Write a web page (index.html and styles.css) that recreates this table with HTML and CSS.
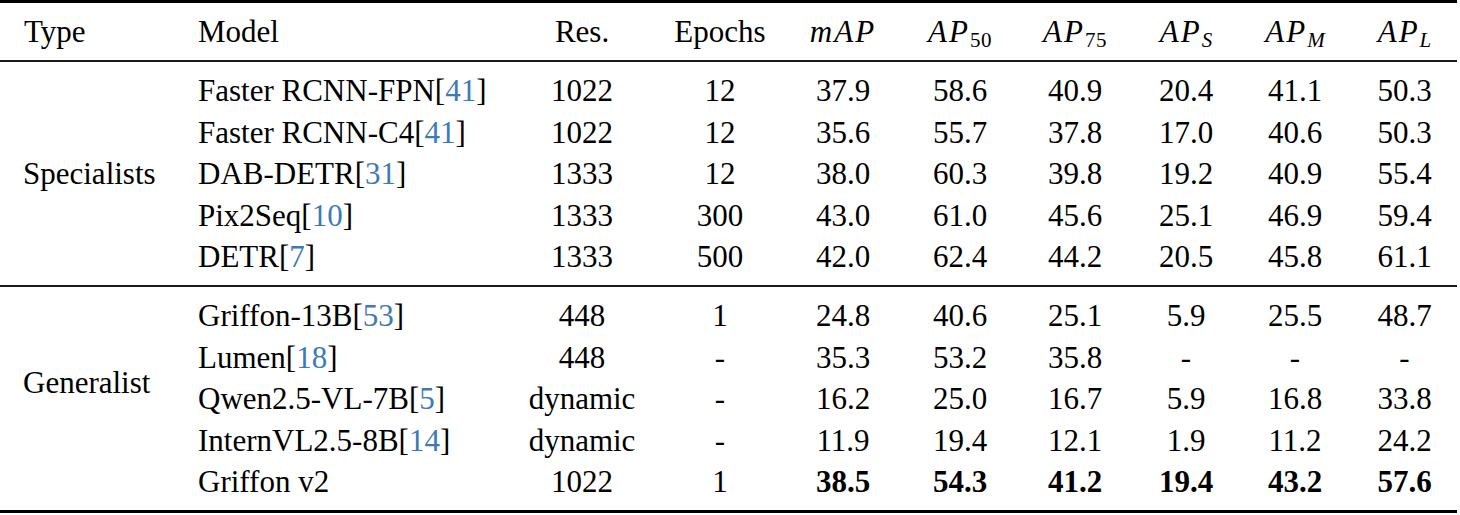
FILE: index.html
```html
<!DOCTYPE html>
<html lang="en">
<head>
<meta charset="utf-8">
<title>Detection results</title>
<link rel="stylesheet" href="styles.css">
</head>
<body>
<div class="tbl">
  <div class="head">
    <div class="c first">Type</div>
    <div class="c model">Model</div>
    <div class="c">Res.</div>
    <div class="c">Epochs</div>
    <div class="c m"><i>mAP</i></div>
    <div class="c m"><i>AP</i><sub>50</sub></div>
    <div class="c m"><i>AP</i><sub>75</sub></div>
    <div class="c m"><i>AP</i><sub><i>S</i></sub></div>
    <div class="c m"><i>AP</i><sub><i>M</i></sub></div>
    <div class="c m"><i>AP</i><sub><i>L</i></sub></div>
  </div>

  <div class="group g1">
    <div class="type">Specialists</div>

    <div class="c model">Faster RCNN-FPN[<span class="cite">41</span>]</div>
    <div class="c">1022</div><div class="c">12</div><div class="c">37.9</div><div class="c">58.6</div><div class="c">40.9</div><div class="c">20.4</div><div class="c">41.1</div><div class="c">50.3</div>

    <div class="c model">Faster RCNN-C4[<span class="cite">41</span>]</div>
    <div class="c">1022</div><div class="c">12</div><div class="c">35.6</div><div class="c">55.7</div><div class="c">37.8</div><div class="c">17.0</div><div class="c">40.6</div><div class="c">50.3</div>

    <div class="c model">DAB-DETR[<span class="cite">31</span>]</div>
    <div class="c">1333</div><div class="c">12</div><div class="c">38.0</div><div class="c">60.3</div><div class="c">39.8</div><div class="c">19.2</div><div class="c">40.9</div><div class="c">55.4</div>

    <div class="c model">Pix2Seq[<span class="cite">10</span>]</div>
    <div class="c">1333</div><div class="c">300</div><div class="c">43.0</div><div class="c">61.0</div><div class="c">45.6</div><div class="c">25.1</div><div class="c">46.9</div><div class="c">59.4</div>

    <div class="c model">DETR[<span class="cite">7</span>]</div>
    <div class="c">1333</div><div class="c">500</div><div class="c">42.0</div><div class="c">62.4</div><div class="c">44.2</div><div class="c">20.5</div><div class="c">45.8</div><div class="c">61.1</div>
  </div>

  <div class="group g2">
    <div class="type gen">Generalist</div>

    <div class="c model">Griffon-13B[<span class="cite">53</span>]</div>
    <div class="c">448</div><div class="c">1</div><div class="c">24.8</div><div class="c">40.6</div><div class="c">25.1</div><div class="c">5.9</div><div class="c">25.5</div><div class="c">48.7</div>

    <div class="c model">Lumen[<span class="cite">18</span>]</div>
    <div class="c">448</div><div class="c">-</div><div class="c">35.3</div><div class="c">53.2</div><div class="c">35.8</div><div class="c">-</div><div class="c">-</div><div class="c">-</div>

    <div class="c model">Qwen2.5-VL-7B[<span class="cite">5</span>]</div>
    <div class="c">dynamic</div><div class="c">-</div><div class="c">16.2</div><div class="c">25.0</div><div class="c">16.7</div><div class="c">5.9</div><div class="c">16.8</div><div class="c">33.8</div>

    <div class="c model">InternVL2.5-8B[<span class="cite">14</span>]</div>
    <div class="c">dynamic</div><div class="c">-</div><div class="c">11.9</div><div class="c">19.4</div><div class="c">12.1</div><div class="c">1.9</div><div class="c">11.2</div><div class="c">24.2</div>

    <div class="c model">Griffon v2</div>
    <div class="c">1022</div><div class="c">1</div><div class="c b">38.5</div><div class="c b">54.3</div><div class="c b">41.2</div><div class="c b">19.4</div><div class="c b">43.2</div><div class="c b">57.6</div>
  </div>
</div>
</body>
</html>
```

FILE: styles.css
```css
html, body {
  margin: 0;
  padding: 0;
  background: #ffffff;
}

body {
  font-family: "Liberation Serif", "Times New Roman", serif;
  font-size: 31px;
  color: #000000;
}

.tbl {
  width: 1457px;
  border-top: 3px solid #000;
  border-bottom: 3px solid #000;
}

.head,
.group {
  display: grid;
  grid-template-columns: 176px 330px 152px 124px 122px 112px 118px 104px 114px 105px;
}

.head {
  height: 57px;
  line-height: 57px;
  border-bottom: 2px solid #1a1a1a;
}

.group {
  grid-template-rows: repeat(5, 41.5px);
  line-height: 41.5px;
  padding: 8px 0 7.5px;
}

.g1 {
  border-bottom: 2px solid #1a1a1a;
}

.c {
  text-align: center;
  white-space: nowrap;
}

.first {
  text-align: left;
  padding-left: 24px;
}

.model {
  text-align: left;
  padding-left: 22px;
  grid-column: 2;
}

.type {
  grid-column: 1;
  grid-row: 1 / span 5;
  align-self: center;
  padding-left: 23px;
  line-height: 34px;
}

.gen {
  margin-top: -32px;
}

.cite {
  color: #3d7ab8;
}

.b {
  font-weight: bold;
}

.m i {
  font-style: italic;
  letter-spacing: 2px;
}

.m sub {
  font-size: 21px;
  line-height: 0;
  vertical-align: -5px;
  letter-spacing: 0.5px;
}

.m sub i {
  letter-spacing: 0;
}
```
